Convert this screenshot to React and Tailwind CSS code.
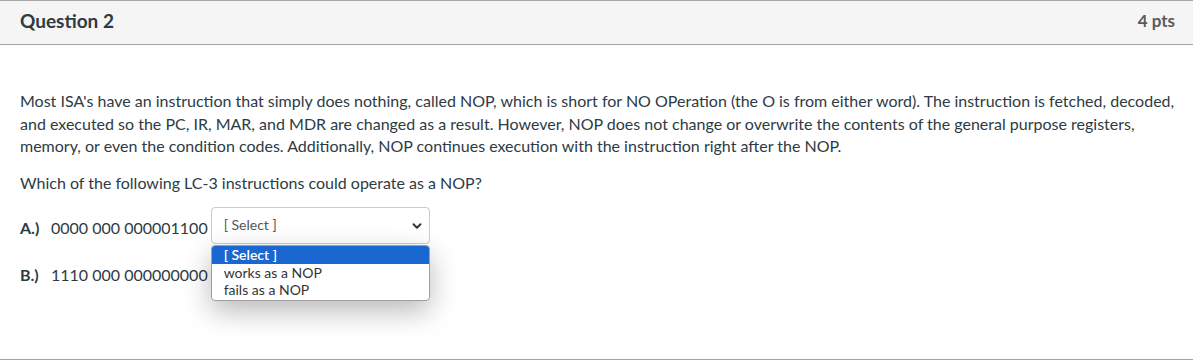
import React from "react";

const Chevron = () => (
  <svg width="12" height="12" viewBox="0 0 12 12" className="text-[#2d3b45]">
    <path d="M2.5 4.2 L6 7.8 L9.5 4.2" fill="none" stroke="currentColor" strokeWidth="2" strokeLinecap="round" strokeLinejoin="round" />
  </svg>
);

const App = () => {
  return (
    <div className="w-[1193px] h-[360px] bg-white font-['Lato',sans-serif] text-[#2d3b45] border-t border-b border-[#a5a5a5] flex flex-col">
      {/* Header */}
      <div className="h-[44px] bg-[#f5f5f5] border-b border-[#a5a5a5] pl-5 pr-[18px] pb-[3px] flex items-center justify-between shrink-0">
        <h2 className="text-[19px] font-bold">Question 2</h2>
        <span className="text-[17px] font-bold text-[#5a5a5a]">4 pts</span>
      </div>

      {/* Body */}
      <div className="pl-5 pr-3 pt-[45px] text-[16px] leading-[22.5px]">
        <p>
          Most ISA's have an instruction that simply does nothing, called NOP, which is short for NO OPeration (the O is from either word). The instruction is fetched, decoded, and executed so the PC, IR, MAR, and MDR are changed as a result. However, NOP does not change or overwrite the contents of the general purpose registers, memory, or even the condition codes. Additionally, NOP continues execution with the instruction right after the NOP.
        </p>
        <p className="mt-[14px]">Which of the following LC-3 instructions could operate as a NOP?</p>

        <div className="mt-[13px] flex flex-col gap-[9px]">
          <div className="flex items-start gap-[3px]">
            <span className="font-bold w-[28px] pt-[10px]">A.)</span>
            <span className="pt-[10px]">0000 000 000001100</span>
            <div className="relative">
              <div className="w-[219px] h-[37px] border border-[#c7cdd1] rounded-[4px] bg-white flex items-center justify-between pl-3 pr-[6px] text-[14px] text-[#555]">
                <span>[ Select ]</span>
                <Chevron />
              </div>
              <div className="absolute left-0 top-[38px] w-[219px] bg-white border border-[#a0a0a0] rounded-[4px] shadow-[0_10px_28px_rgba(0,0,0,0.28)] overflow-hidden text-[14px] leading-[17.5px] pb-[1px] z-10">
                <div className="bg-[#1a67d2] text-white font-semibold px-3">[ Select ]</div>
                <div className="px-3 text-[#333]">works as a NOP</div>
                <div className="px-3 text-[#333]">fails as a NOP</div>
              </div>
            </div>
          </div>
          <div className="flex items-start gap-[3px] pt-[11px]">
            <span className="font-bold w-[28px]">B.)</span>
            <span>1110 000 000000000</span>
          </div>
        </div>
      </div>
    </div>
  );
};

export default App;
